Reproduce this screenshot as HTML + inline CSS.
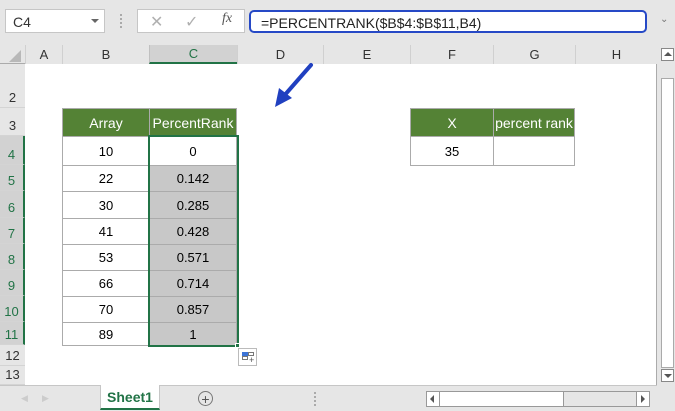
<!DOCTYPE html>
<html><head><style>
*{margin:0;padding:0;box-sizing:border-box}
body{width:675px;height:411px;position:relative;overflow:hidden;background:#fff;font-family:"Liberation Sans",Arial,sans-serif;font-size:13px;color:#000}
.a{position:absolute}
.c{position:absolute;display:flex;align-items:center;justify-content:center}
.hd{background:#e6e6e6;color:#333;font-size:13px}
.rh{position:absolute;left:0;width:25px;background:#e6e6e6;color:#333;font-size:13px;display:flex;align-items:flex-end;justify-content:center;padding-bottom:2px;border-bottom:1px solid #d4d4d4}
.sel{background:#d2d2d2;color:#217346;border-right:2px solid #217346}
.cell{position:absolute;display:flex;align-items:center;justify-content:center;border:1px solid #ababab;font-size:13px}
.g{background:#548235;color:#fff}
.gr{background:#c8c8c8}
</style></head><body>
<div class="a" style="left:0;top:0;width:675px;height:45px;background:#e6e6e6"></div>
<div class="a" style="left:5px;top:9px;width:100px;height:24px;background:#fff;border:1px solid #c6c6c6;padding:4px 0 0 7px;font-size:14px;color:#333">C4</div>
<div class="a" style="left:91px;top:19px;width:0;height:0;border-left:4px solid transparent;border-right:4px solid transparent;border-top:4px solid #666"></div>
<div class="a" style="left:120px;top:14px;width:2px;height:14px;border-left:2px dotted #aaa"></div>
<div class="a" style="left:137px;top:9px;width:108px;height:24px;background:#fff;border:1px solid #c6c6c6"></div>
<div class="a" style="left:150px;top:12px;color:#b0b0b0;font-size:16px">✕</div>
<div class="a" style="left:185px;top:12px;color:#b0b0b0;font-size:16px">✓</div>
<div class="a" style="left:222px;top:11px;color:#555;font-size:14px;font-family:'Liberation Serif',serif;font-style:italic">fx</div>
<div class="a" style="left:249px;top:10px;width:398px;height:23px;background:#fff;border:2px solid #2649c6;border-radius:5px;padding:3px 0 0 10px;font-size:14px;color:#222">=PERCENTRANK($B$4:$B$11,B4)</div>
<div class="a" style="left:660px;top:14px;color:#777;font-size:10px">&#8964;</div>
<div class="a hd" style="left:0;top:45px;width:660px;height:19px;border-bottom:1px solid #ababab"></div>
<div class="a" style="left:9px;top:50px;width:0;height:0;border-left:12px solid transparent;border-bottom:12px solid #b8b8b8"></div>
<div class="c hd" style="left:25px;top:45px;width:37px;height:19px;border-left:1px solid #d0d0d0">A</div>
<div class="c hd" style="left:62px;top:45px;width:87px;height:19px;border-left:1px solid #d0d0d0">B</div>
<div class="c" style="left:149px;top:45px;width:88px;height:19px;background:#d2d2d2;color:#217346;border-bottom:2px solid #217346;border-left:1px solid #c0c0c0">C</div>
<div class="c hd" style="left:237px;top:45px;width:86px;height:19px;border-left:1px solid #d0d0d0">D</div>
<div class="c hd" style="left:323px;top:45px;width:87px;height:19px;border-left:1px solid #d0d0d0">E</div>
<div class="c hd" style="left:410px;top:45px;width:83px;height:19px;border-left:1px solid #d0d0d0">F</div>
<div class="c hd" style="left:493px;top:45px;width:82px;height:19px;border-left:1px solid #d0d0d0">G</div>
<div class="c hd" style="left:575px;top:45px;width:82px;height:19px;border-left:1px solid #d0d0d0">H</div>
<div class="a" style="left:0;top:64px;width:25px;height:321px;background:#e6e6e6;border-right:1px solid #ababab"></div>
<div class="rh" style="top:64px;height:44px">2</div>
<div class="rh" style="top:108px;height:28px">3</div>
<div class="rh sel" style="top:136px;height:29px">4</div>
<div class="rh sel" style="top:165px;height:26px">5</div>
<div class="rh sel" style="top:191px;height:27px">6</div>
<div class="rh sel" style="top:218px;height:26px">7</div>
<div class="rh sel" style="top:244px;height:26px">8</div>
<div class="rh sel" style="top:270px;height:26px">9</div>
<div class="rh sel" style="top:296px;height:26px">10</div>
<div class="rh sel" style="top:322px;height:23px">11</div>
<div class="rh" style="top:345px;height:21px">12</div>
<div class="rh" style="top:366px;height:19px">13</div>
<div class="a" style="left:656px;top:64px;width:1px;height:321px;background:#ababab"></div>
<div class="a" style="left:657px;top:45px;width:18px;height:366px;background:#e6e6e6"></div>
<div class="a" style="left:661px;top:48px;width:13px;height:13px;border:1px solid #888;background:#fff"></div>
<div class="a" style="left:664px;top:52px;border-left:4px solid transparent;border-right:4px solid transparent;border-bottom:4px solid #555"></div>
<div class="a" style="left:661px;top:78px;width:13px;height:290px;border:1px solid #aaa;background:#fff"></div>
<div class="a" style="left:661px;top:369px;width:13px;height:13px;border:1px solid #888;background:#fff"></div>
<div class="a" style="left:664px;top:374px;border-left:4px solid transparent;border-right:4px solid transparent;border-top:4px solid #555"></div>
<div class="cell g" style="left:62px;top:108px;width:88px;height:29px;font-size:14px">Array</div>
<div class="cell g" style="left:149px;top:108px;width:88px;height:29px;font-size:14px">PercentRank</div>
<div class="cell" style="left:62px;top:136px;width:88px;height:30px">10</div>
<div class="cell" style="left:62px;top:165px;width:88px;height:27px">22</div>
<div class="cell" style="left:62px;top:191px;width:88px;height:28px">30</div>
<div class="cell" style="left:62px;top:218px;width:88px;height:27px">41</div>
<div class="cell" style="left:62px;top:244px;width:88px;height:27px">53</div>
<div class="cell" style="left:62px;top:270px;width:88px;height:27px">66</div>
<div class="cell" style="left:62px;top:296px;width:88px;height:27px">70</div>
<div class="cell" style="left:62px;top:322px;width:88px;height:24px">89</div>
<div class="cell" style="left:149px;top:136px;width:88px;height:30px">0</div>
<div class="cell gr" style="left:149px;top:165px;width:88px;height:27px">0.142</div>
<div class="cell gr" style="left:149px;top:191px;width:88px;height:28px">0.285</div>
<div class="cell gr" style="left:149px;top:218px;width:88px;height:27px">0.428</div>
<div class="cell gr" style="left:149px;top:244px;width:88px;height:27px">0.571</div>
<div class="cell gr" style="left:149px;top:270px;width:88px;height:27px">0.714</div>
<div class="cell gr" style="left:149px;top:296px;width:88px;height:27px">0.857</div>
<div class="cell gr" style="left:149px;top:322px;width:88px;height:24px">1</div>
<div class="a" style="left:148px;top:135px;width:91px;height:212px;border:2px solid #217346"></div>
<div class="a" style="left:235px;top:343px;width:5px;height:5px;background:#217346;border:1px solid #fff"></div>
<div class="a" style="left:238px;top:348px;width:19px;height:18px;border:1px solid #bbb;background:#fff"></div>
<div class="a" style="left:242px;top:352px;width:6px;height:4px;background:#3b73d6"></div>
<div class="a" style="left:248px;top:352px;width:6px;height:4px;border:1px solid #777"></div>
<div class="a" style="left:242px;top:356px;width:6px;height:4px;border:1px solid #777"></div>
<div class="a" style="left:249px;top:355px;font-size:9px;color:#555">+</div>
<div class="cell g" style="left:410px;top:108px;width:84px;height:29px;font-size:14px">X</div>
<div class="cell g" style="left:493px;top:108px;width:82px;height:29px;font-size:14px">percent rank</div>
<div class="cell" style="left:410px;top:136px;width:84px;height:30px">35</div>
<div class="cell" style="left:493px;top:136px;width:82px;height:30px"></div>
<svg class="a" style="left:270px;top:60px" width="50" height="55"><path d="M41 5 L13 37" stroke="#2040c0" stroke-width="4" fill="none" stroke-linecap="round"/><path d="M5 47 L9 28 L22 38 Z" fill="#2040c0"/></svg>
<div class="a" style="left:0;top:385px;width:657px;height:26px;background:#e6e6e6;border-top:1px solid #c6c6c6"></div>
<div class="a" style="left:21px;top:393px;color:#ccc;font-size:9px">◀</div>
<div class="a" style="left:42px;top:393px;color:#ccc;font-size:9px">▶</div>
<div class="c" style="left:100px;top:385px;width:60px;height:25px;background:#fff;color:#217346;font-weight:bold;font-size:14px;border-bottom:2px solid #217346;border-left:1px solid #c6c6c6;border-right:1px solid #c6c6c6">Sheet1</div>
<div class="c" style="left:198px;top:391px;width:15px;height:15px;border:1px solid #777;border-radius:50%;color:#555;font-size:14px;line-height:1">+</div>
<div class="a" style="left:314px;top:392px;width:2px;height:14px;border-left:2px dotted #aaa"></div>
<div class="a" style="left:426px;top:391px;width:224px;height:16px;border:1px solid #999;background:#e6e6e6"></div>
<div class="a" style="left:426px;top:391px;width:138px;height:16px;border:1px solid #999;background:#fff"></div>
<div class="a" style="left:426px;top:391px;width:14px;height:16px;border:1px solid #999;background:#fff"></div>
<div class="a" style="left:430px;top:395px;border-top:4px solid transparent;border-bottom:4px solid transparent;border-right:4px solid #555"></div>
<div class="a" style="left:636px;top:391px;width:14px;height:16px;border:1px solid #999;background:#fff"></div>
<div class="a" style="left:641px;top:395px;border-top:4px solid transparent;border-bottom:4px solid transparent;border-left:4px solid #555"></div>
</body></html>
